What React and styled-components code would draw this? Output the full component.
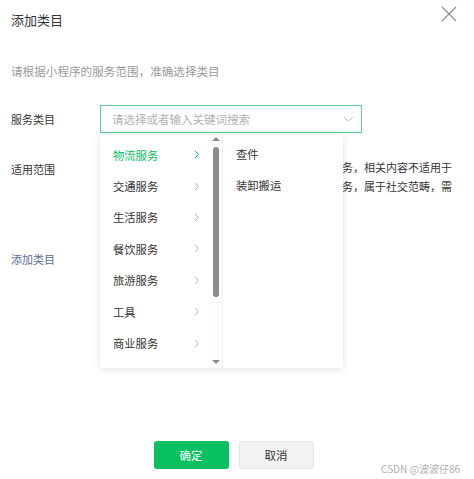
import React from "react";
import styled, { createGlobalStyle } from "styled-components";

const GlobalStyle = createGlobalStyle`
  html, body {
    margin: 0;
    padding: 0;
    background: #fff;
  }
  body {
    font-family: "Noto Sans CJK SC", "Noto Sans", sans-serif;
    color: #353535;
  }
`;

const categories = [
  "物流服务",
  "交通服务",
  "生活服务",
  "餐饮服务",
  "旅游服务",
  "工具",
  "商业服务",
];

const subCategories = ["查件", "装卸搬运"];

function Chevron({ color }) {
  return (
    <svg width="6" height="9" viewBox="0 0 6 9">
      <path d="M1 1l3.5 3.5L1 8" fill="none" stroke={color} strokeWidth="1" />
    </svg>
  );
}

function App() {
  return (
    <Page>
      <GlobalStyle />
      <Header>
        <Title>添加类目</Title>
        <CloseButton>
          <svg width="16" height="16" viewBox="0 0 16 16">
            <path d="M1 1L15 15M15 1L1 15" stroke="#8a8a8a" strokeWidth="1.1" />
          </svg>
        </CloseButton>
      </Header>
      <Subtitle>请根据小程序的服务范围，准确选择类目</Subtitle>

      <FormRow>
        <Label>服务类目</Label>
        <SelectWrap>
          <SelectBox>
            <Placeholder>请选择或者输入关键词搜索</Placeholder>
            <svg width="11" height="7" viewBox="0 0 11 7">
              <path d="M1 1l4.5 4.5L10 1" fill="none" stroke="#c4c4c4" strokeWidth="1" />
            </svg>
          </SelectBox>
          <Dropdown>
            <LeftPane>
              <MenuList>
                {categories.map((c, i) => (
                  <MenuItem key={c} active={i === 0}>
                    <span>{c}</span>
                    <Chevron color={i === 0 ? "#07c160" : "#b5b5b5"} />
                  </MenuItem>
                ))}
              </MenuList>
              <ScrollBar>
                <ArrowUp />
                <Thumb />
                <Spacer />
                <ArrowDown />
              </ScrollBar>
            </LeftPane>
            <RightPane>
              {subCategories.map((s) => (
                <SubItem key={s}>{s}</SubItem>
              ))}
            </RightPane>
          </Dropdown>
        </SelectWrap>
      </FormRow>

      <ScopeRow>
        <Label>适用范围</Label>
        <ScopeText>
          类目适用于提供物流查件、装卸搬运等线下实体服务，相关内容不适用于
          <br />
          若小程序提供用户间线上交流、发布信息等互动服务，属于社交范畴，需
        </ScopeText>
      </ScopeRow>

      <AddLink>添加类目</AddLink>

      <Footer>
        <PrimaryButton>确定</PrimaryButton>
        <DefaultButton>取消</DefaultButton>
      </Footer>
      <Watermark>CSDN @波波仔86</Watermark>
    </Page>
  );
}

const Page = styled.div`
  position: relative;
  box-sizing: border-box;
  height: 100vh;
  padding: 0 11px 10px;
  display: flex;
  flex-direction: column;
`;

const Header = styled.div`
  display: flex;
  align-items: center;
  justify-content: space-between;
  height: 36px;
  padding-top: 1px;
`;

const Title = styled.div`
  font-size: 13px;
  color: #353535;
`;

const CloseButton = styled.div`
  display: flex;
  align-items: center;
  margin-right: 6px;
  margin-top: -10px;
`;

const Subtitle = styled.div`
  margin-top: 24px;
  font-size: 11.6px;
  line-height: 20px;
  color: #9a9a9a;
`;

const FormRow = styled.div`
  display: flex;
  margin-top: 24px;
  position: relative;
  z-index: 2;
`;

const Label = styled.div`
  width: 89px;
  flex-shrink: 0;
  font-size: 11px;
  line-height: 28px;
  color: #353535;
`;

const SelectWrap = styled.div`
  position: relative;
`;

const SelectBox = styled.div`
  box-sizing: border-box;
  width: 262px;
  height: 28px;
  border: 1px solid #5ccf92;
  display: flex;
  align-items: center;
  justify-content: space-between;
  padding: 0 7px 0 11px;
  background: #fff;
`;

const Placeholder = styled.span`
  font-size: 11.5px;
  color: #b2b2b2;
`;

const Dropdown = styled.div`
  position: absolute;
  top: 30px;
  left: 0;
  width: 243px;
  height: 233px;
  display: flex;
  background: #fff;
  box-shadow: 0 1px 8px rgba(0, 0, 0, 0.12);
`;

const LeftPane = styled.div`
  display: flex;
  width: 122px;
  border-right: 1px solid #f0f0f0;
`;

const MenuList = styled.div`
  flex: 1;
  padding-top: 4px;
`;

const MenuItem = styled.div`
  display: flex;
  align-items: center;
  justify-content: space-between;
  height: 31.4px;
  padding: 0 10px 0 13px;
  font-size: 11.3px;
  color: ${(p) => (p.active ? "#07c160" : "#353535")};
`;

const ScrollBar = styled.div`
  width: 12px;
  display: flex;
  flex-direction: column;
  align-items: center;
  padding: 2px 0 4px;
  background: #fdfdfd;
`;

const ArrowUp = styled.div`
  width: 0;
  height: 0;
  border-left: 4px solid transparent;
  border-right: 4px solid transparent;
  border-bottom: 4px solid #8a8a8a;
`;

const ArrowDown = styled.div`
  width: 0;
  height: 0;
  border-left: 4px solid transparent;
  border-right: 4px solid transparent;
  border-top: 4px solid #8a8a8a;
`;

const Thumb = styled.div`
  width: 6px;
  height: 150px;
  margin-top: 6px;
  border-radius: 3px;
  background: #8c8c8c;
`;

const Spacer = styled.div`
  flex: 1;
`;

const RightPane = styled.div`
  flex: 1;
  padding-top: 4px;
`;

const SubItem = styled.div`
  height: 31.4px;
  line-height: 31.4px;
  padding-left: 13px;
  font-size: 11.3px;
  color: #353535;
`;

const ScopeRow = styled.div`
  display: flex;
  margin-top: 25px;
  ${Label} {
    line-height: 19px;
    padding-top: 2px;
  }
`;

const ScopeText = styled.div`
  font-size: 11px;
  line-height: 19px;
  color: #353535;
  white-space: nowrap;
`;

const AddLink = styled.div`
  margin-top: 53px;
  font-size: 11px;
  line-height: 20px;
  color: #576b95;
`;

const Footer = styled.div`
  margin-top: auto;
  display: flex;
  justify-content: center;
  gap: 10px;
  padding-right: 7px;
`;

const ButtonBase = styled.div`
  box-sizing: border-box;
  width: 75px;
  height: 28px;
  border-radius: 3px;
  display: flex;
  align-items: center;
  justify-content: center;
  font-size: 11.5px;
`;

const PrimaryButton = styled(ButtonBase)`
  background: #07c160;
  color: #fff;
`;

const DefaultButton = styled(ButtonBase)`
  background: #f2f2f2;
  border: 1px solid #e6e6e6;
  color: #353535;
`;

const Watermark = styled.div`
  position: absolute;
  right: 14px;
  bottom: 3px;
  font-size: 10px;
  color: #b0b0b0;
`;

export default App;
